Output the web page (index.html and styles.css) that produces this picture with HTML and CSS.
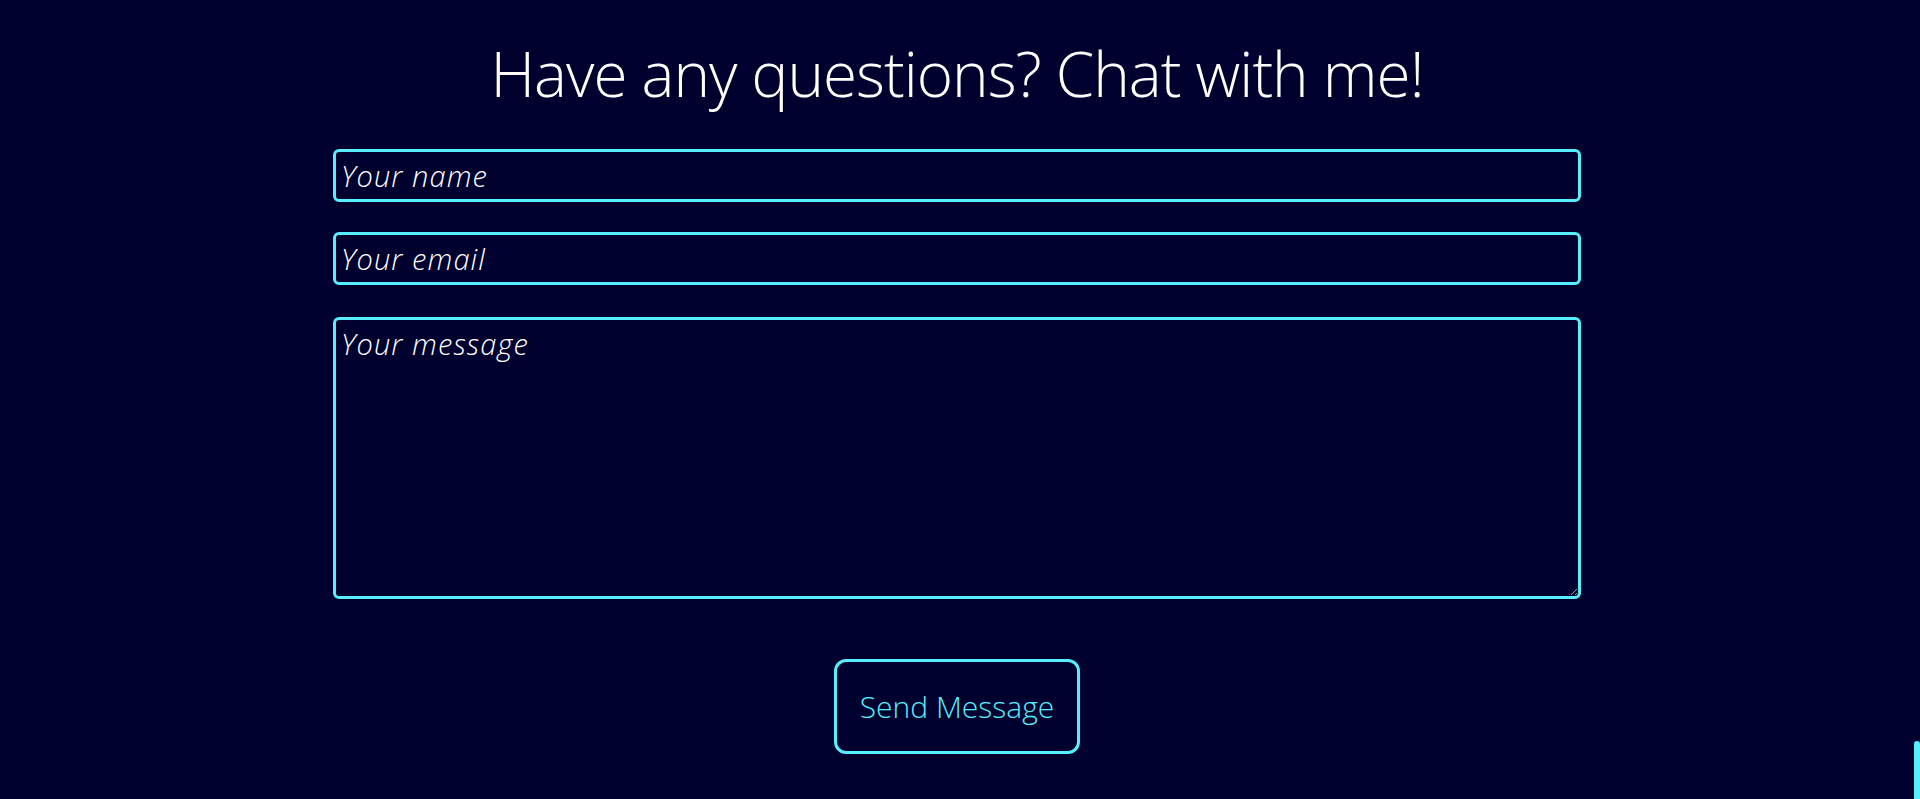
FILE: index.html
```html
<!DOCTYPE html>
<html lang="en">
<head>
<meta charset="utf-8">
<title>Contact</title>
<link rel="stylesheet" href="styles.css">
</head>
<body>
<main class="page">
  <section class="contact">
    <h1 class="contact-title">Have any questions? Chat with me!</h1>
    <form class="contact-form">
      <input class="field" type="text" placeholder="Your name">
      <input class="field field-email" type="email" placeholder="Your email">
      <textarea class="field field-message" placeholder="Your message"></textarea>
      <button class="send-btn" type="button">Send Message</button>
    </form>
  </section>
</main>
<div class="scroll-indicator"></div>
</body>
</html>
```

FILE: styles.css
```css
html, body {
  margin: 0;
  padding: 0;
  height: 100%;
  overflow: hidden;
  background: #00002e;
}

.page {
  height: 100vh;
  box-sizing: border-box;
  padding-right: 6px;
  background: #00002e;
  font-family: "Open Sans", "Noto Sans", sans-serif;
}

.scroll-indicator {
  position: fixed;
  right: 0;
  bottom: 0;
  width: 6px;
  height: 58px;
  background: #55eefa;
  border-radius: 3px 3px 0 0;
}

.contact {
  display: flex;
  flex-direction: column;
  align-items: center;
  padding-top: 31px;
}

.contact-title {
  margin: 0;
  font-size: 62px;
  font-weight: 300;
  letter-spacing: -1px;
  color: #ffffff;
  line-height: normal;
}

.contact-form {
  width: 1248px;
  margin-top: 34px;
  display: flex;
  flex-direction: column;
  align-items: center;
}

.field {
  width: 100%;
  box-sizing: border-box;
  height: 53px;
  margin: 0 0 30px 0;
  padding: 4px 5px;
  background: transparent;
  border: 3px solid #55eefa;
  border-radius: 6px;
  color: #ffffff;
  font-family: "Open Sans", "Noto Sans", sans-serif;
  font-size: 29px;
  font-weight: 300;
  letter-spacing: 1.1px;
  outline: none;
}

.field-email {
  margin-bottom: 32px;
}

.field::placeholder {
  color: #ffffff;
  font-style: italic;
  font-weight: 300;
  opacity: 1;
}

.field-message {
  height: 282px;
  margin-bottom: 60px;
  resize: vertical;
  display: block;
}

.send-btn {
  box-sizing: border-box;
  width: 246px;
  height: 95px;
  padding: 0 20px;
  background: transparent;
  border: 3px solid #55eefa;
  border-radius: 12px;
  color: #55eefa;
  font-family: "Open Sans", "Noto Sans", sans-serif;
  font-size: 30px;
  font-weight: 300;
  cursor: pointer;
}
```
